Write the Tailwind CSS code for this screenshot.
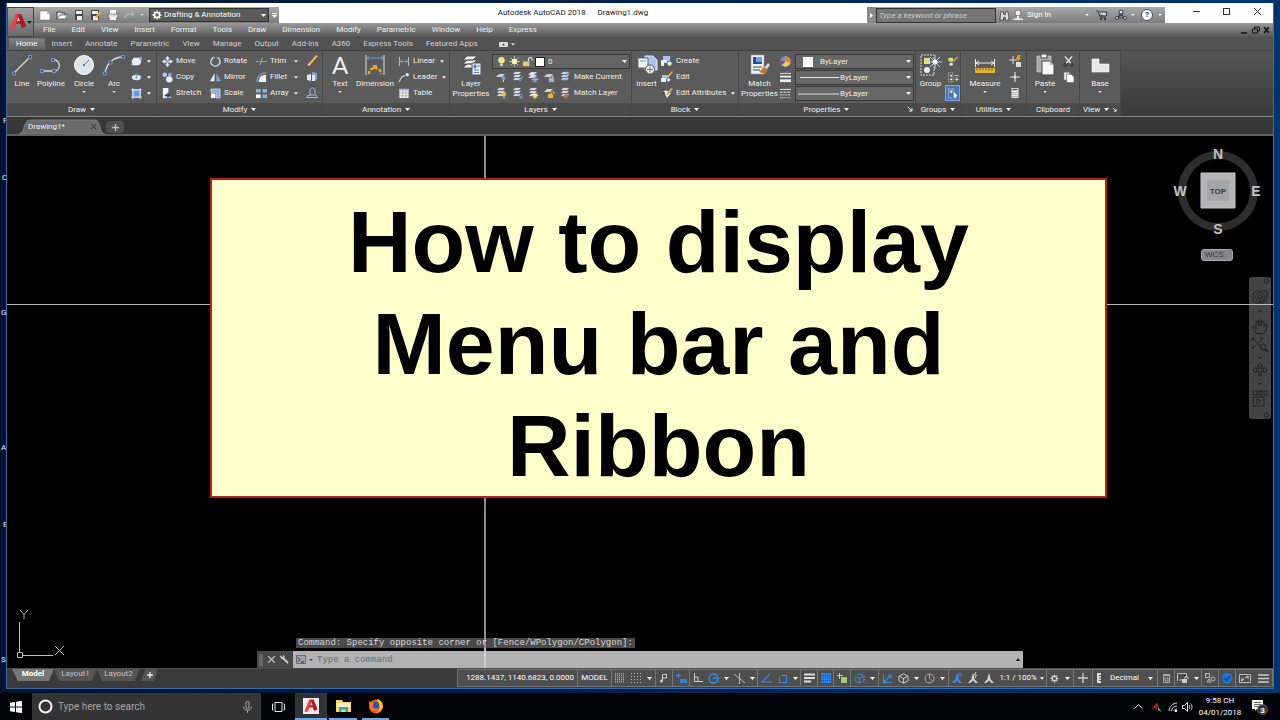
<!DOCTYPE html>
<html lang="en">
<head>
    <meta charset="UTF-8">
    <meta name="viewport" content="width=device-width, initial-scale=1.0">
    <title>Autodesk AutoCAD 2018 - Drawing1.dwg</title>
    <script src="https://cdn.jsdelivr.net/npm/@tailwindcss/browser@4"></script>
</head>
<body class="h-screen overflow-hidden flex flex-col bg-[#020a1c] font-['Roboto','Noto_Sans',sans-serif] text-[8px] leading-[10px] text-[#f0f0f0]">

    <!-- shared glyphs -->
    <svg class="hidden">
        <symbol id="dn" viewBox="0 0 5 3"><path d="M0 0h5L2.500 3z" fill="currentColor"/></symbol>
        <symbol id="acad" viewBox="0 0 20 20">
            <path d="M2 17L8 2h5l5 12-4 2-1.500-4H8l-2 5z" fill="#c4272d"/>
            <path d="M8 2l2 1-4 14H2z" fill="#e8484a"/>
            <path d="M13 2l5 12-4 2-3.500-10z" fill="#a31a20"/>
            <path d="M9 9l1.500-4L12 9z" fill="#f3d5d5"/>
        </symbol>
        <symbol id="sheets" viewBox="0 0 12 12">
            <path d="M4 1h6L8 3H2zM4 4h6L8 6H2zM4 7h6L8 9H2z" fill="#e8ecf2" stroke="#8b95a5" stroke-width=".4"/>
        </symbol>
        <symbol id="gear" viewBox="0 0 12 12">
            <circle cx="6" cy="6" r="3" fill="none" stroke="currentColor" stroke-width="1.800"/>
            <path d="M6 .5v2M6 9.500v2M.5 6h2M9.500 6h2M2.100 2.100l1.400 1.400M8.500 8.500l1.400 1.400M9.900 2.100L8.500 3.500M3.500 8.500L2.100 9.900" stroke="currentColor" stroke-width="1.600"/>
        </symbol>
        <symbol id="launch" viewBox="0 0 5 5"><path d="M0 0l4 4M4 1v3H1" stroke="currentColor" fill="none"/></symbol>
        <symbol id="man" viewBox="0 0 12 12"><path d="M6 1l1 3 .5 3L11 11H8.500L6 8.500 3.500 11H1l3.500-4L5 4z" fill="currentColor"/></symbol>
        <symbol id="cube" viewBox="0 0 12 12"><path d="M6 1l5 2.500v5L6 11 1 8.500v-5zM1 3.500L6 6l5-2.500M6 6v5" fill="none" stroke="currentColor"/></symbol>
    </svg>

    <div class="relative flex-1 min-h-0 flex bg-linear-to-r from-[#001430] to-[#00356b] pt-[3px] pl-[6px] pr-[6px] pb-[4px]">

        <!-- desktop icon captions that stick out behind the window -->
        <div class="absolute left-0 top-0 w-[7px] h-full">
            <span class="absolute left-[3px] top-[116px]">P</span>
            <span class="absolute left-[2px] top-[173px]">C</span>
            <span class="absolute left-[1px] top-[308px]">G</span>
            <span class="absolute left-[1px] top-[443px]">A</span>
            <span class="absolute left-[3px] top-[520px]">E</span>
            <span class="absolute left-[1px] top-[655px]">S</span>
        </div>

        <main class="relative flex-1 min-w-0 flex flex-col border-x border-b border-[#3c6ca8] bg-black">

            <!-- title bar and menu bar -->
            <header class="flex bg-white">
                <div class="w-[27px] pt-1 flex">
                    <button aria-label="Application menu" class="flex-1 flex items-center bg-linear-to-b from-[#a0a0a0] to-[#6a6a6a] border border-[#444]">
                        <svg class="w-5 h-5" viewBox="0 0 20 20"><use href="#acad"/></svg>
                        <svg class="w-[5px] h-[3px] -ml-px text-[#222]"><use href="#dn"/></svg>
                    </button>
                </div>
                <div class="flex-1 min-w-0 flex flex-col">
                    <div class="h-5 flex items-end text-[#222]">
                        <div class="h-4 w-[245px] flex items-center bg-linear-to-b from-[#a9a9a9] to-[#7c7c7c]">
                            <div class="flex-1 flex items-center justify-evenly">
                                <button aria-label="New"><svg class="w-3 h-3" viewBox="0 0 12 12"><path d="M1 2h7l3 3v6H1z" fill="#fff" stroke="#777" stroke-width=".5"/><path d="M8 2v3h3" fill="#bbb"/></svg></button>
                                <button aria-label="Open"><svg class="w-3 h-3" viewBox="0 0 12 12"><path d="M1 10V3h4l1 1h3v2" fill="#ddd" stroke="#444"/><path d="M1 10l3-4h8l-3 4z" fill="#fff" stroke="#444" stroke-width=".7"/></svg></button>
                                <button aria-label="Save"><svg class="w-3 h-3" viewBox="0 0 12 12"><path d="M2 1h8v10H2z" fill="#444"/><path d="M3 2h6v3H3zM4 7h5v4H4z" fill="#eee"/></svg></button>
                                <button aria-label="Save as"><svg class="w-3 h-3" viewBox="0 0 12 12"><path d="M1 1h8v10H1z" fill="#444"/><path d="M2 2h6v3H2zM3 7h5v4H3z" fill="#eee"/><path d="M5 8l5-6 2 1-5 6z" fill="#e5a92c"/></svg></button>
                                <button aria-label="Plot"><svg class="w-3 h-3" viewBox="0 0 12 12"><path d="M3 1h6v4H3z" fill="#fff"/><path d="M1 5h10v4H1z" fill="#ddd" stroke="#555" stroke-width=".6"/><path d="M3 8h6v3H3z" fill="#fff"/></svg></button>
                                <button aria-label="Redo" class="flex items-center gap-1"><svg class="w-3 h-3" viewBox="0 0 12 12"><path d="M1 9c0-3 3-4 6-4" fill="none" stroke="#b4b4b4" stroke-width="1.500"/><path d="M7 2l4 3-4 3z" fill="#b4b4b4"/></svg><svg class="w-[4px] h-[2px] text-[#ddd]"><use href="#dn"/></svg></button>
                            </div>
                            <div class="h-[14px] w-[120px] flex items-center gap-px px-[2px] bg-[#5a5a5a] border border-[#333] text-white">
                                <svg class="w-[10px] h-[10px]"><use href="#gear"/></svg>
                                <select aria-label="Workspace" class="appearance-none flex-1 min-w-0 bg-transparent outline-none pl-px"><option>Drafting &amp; Annotation</option></select>
                                <svg class="w-[5px] h-[3px]"><use href="#dn"/></svg>
                            </div>
                            <button aria-label="Customize toolbar" class="w-[10px] flex flex-col items-center gap-px text-white"><span class="w-[5px] h-px bg-white"></span><svg class="w-[5px] h-[3px]"><use href="#dn"/></svg></button>
                        </div>
                        <h1 class="flex-1 self-center text-center whitespace-pre">Autodesk AutoCAD 2018      Drawing1.dwg</h1>
                        <div class="h-4 w-[298px] flex items-center bg-linear-to-b from-[#a9a9a9] to-[#7c7c7c] text-white">
                            <button aria-label="Collapse search" class="w-[9px] h-full flex items-center justify-center bg-[#8a8a8a]"><svg class="w-[3px] h-[5px]" viewBox="0 0 3 5"><path d="M0 0l3 2.500L0 5z" fill="#fff"/></svg></button>
                            <input aria-label="Search help" placeholder="Type a keyword or phrase" class="w-[120px] h-[15px] px-[2px] italic bg-[#757575] border border-[#333] placeholder:text-[#cfcfcf] outline-none">
                            <button aria-label="Search" class="w-[16px] flex justify-center"><svg class="w-[11px] h-[11px]" viewBox="0 0 12 12"><path d="M2 2h3v3h2V2h3l1 9H7V8H5v3H1z" fill="#ddd" stroke="#333" stroke-width=".8"/></svg></button>
                            <button class="flex-1 flex items-center gap-[3px]"><svg class="w-[12px] h-3" viewBox="0 0 12 12"><circle cx="6" cy="4" r="3" fill="#eee" stroke="#555" stroke-width=".7"/><path d="M5 7h2v2l4 1v1H1v-1l4-1z" fill="#eee"/></svg><span class="flex-1 text-left">Sign In</span><svg class="w-[4px] h-[2px]"><use href="#dn"/></svg></button>
                            <button aria-label="App store" class="w-[26px] flex justify-center"><svg class="w-[12px] h-3" viewBox="0 0 12 12"><path d="M0 2h2l2 6h6M3 3h8l-1 4H4" fill="#cdd5e8" stroke="#223" stroke-width=".9"/><circle cx="5" cy="10" r="1" fill="#223"/><circle cx="9" cy="10" r="1" fill="#223"/></svg></button>
                            <button aria-label="Stay connected" class="w-[22px] flex items-center gap-[4px]"><svg class="w-3 h-3 text-[#223]" viewBox="0 0 12 12"><path d="M6 3L3 9h6zM2 9l4-3 4 3" fill="none" stroke="#33384d"/><circle cx="6" cy="3" r="2" fill="#dde3f3" stroke="#33384d"/><circle cx="2" cy="9" r="1.500" fill="#dde3f3" stroke="#33384d"/><circle cx="10" cy="9" r="1.500" fill="#dde3f3" stroke="#33384d"/></svg><svg class="w-[4px] h-[2px]"><use href="#dn"/></svg></button>
                            <button aria-label="Help" class="w-[28px] pl-1 flex items-center gap-[5px]"><span class="w-3 h-3 rounded-full bg-white border border-[#344f86] text-[#1d3976] font-bold flex items-center justify-center">?</span><svg class="w-[4px] h-[2px]"><use href="#dn"/></svg></button>
                        </div>
                        <div class="w-[108px] self-stretch pb-1 flex items-center justify-around pl-[16px]">
                            <button aria-label="Minimize" class="w-[7px] h-px bg-[#333]"></button>
                            <button aria-label="Restore" class="w-[7px] h-[7px] border border-[#333]"></button>
                            <button aria-label="Close"><svg class="w-[7px] h-[7px]" viewBox="0 0 7 7"><path d="M0 0l7 7M7 0L0 7" stroke="#333"/></svg></button>
                        </div>
                    </div>
                    <nav aria-label="Menu bar" class="h-[14px] flex items-center pl-px bg-linear-to-b from-[#999] to-[#575757]">
                        <a href="#" class="px-2">File</a>
                        <a href="#" class="px-2">Edit</a>
                        <a href="#" class="px-2">View</a>
                        <a href="#" class="px-2">Insert</a>
                        <a href="#" class="px-2">Format</a>
                        <a href="#" class="px-2">Tools</a>
                        <a href="#" class="px-2">Draw</a>
                        <a href="#" class="px-2">Dimension</a>
                        <a href="#" class="px-2">Modify</a>
                        <a href="#" class="px-2">Parametric</a>
                        <a href="#" class="px-2">Window</a>
                        <a href="#" class="px-2">Help</a>
                        <a href="#" class="px-2">Express</a>
                        <svg class="ml-auto mr-1 w-[28px] h-[8px]" viewBox="0 0 28 8"><path d="M0 7h6" stroke="#111" stroke-width="1.500"/><path d="M13.500 3V1h5v4h-2M11.500 3h5v4h-5z" fill="none" stroke="#111"/><path d="M23 1l5 6M28 1l-5 6" stroke="#111" stroke-width="1.600"/></svg>
                    </nav>
                </div>
            </header>

            <!-- ribbon tabs -->
            <nav aria-label="Ribbon tabs" class="h-[13px] flex items-end gap-px pl-[2px] bg-[#525252] text-[#cfcfcf]">
                <a href="#" class="h-[12px] px-[6px] bg-linear-to-b from-[#808080] to-[#5d5d5d] border-x border-t border-[#777] text-white">Home</a>
                <a href="#" class="h-[12px] px-[6px] pt-px">Insert</a>
                <a href="#" class="h-[12px] px-[6px] pt-px">Annotate</a>
                <a href="#" class="h-[12px] px-[6px] pt-px">Parametric</a>
                <a href="#" class="h-[12px] px-[6px] pt-px">View</a>
                <a href="#" class="h-[12px] px-[6px] pt-px">Manage</a>
                <a href="#" class="h-[12px] px-[6px] pt-px">Output</a>
                <a href="#" class="h-[12px] px-[6px] pt-px">Add-ins</a>
                <a href="#" class="h-[12px] px-[6px] pt-px">A360</a>
                <a href="#" class="h-[12px] px-[6px] pt-px">Express Tools</a>
                <a href="#" class="h-[12px] px-[6px] pt-px">Featured Apps</a>
                <button aria-label="Minimize ribbon" class="h-[12px] ml-[14px] flex items-center gap-[3px]"><svg class="w-[9px] h-[5px]" viewBox="0 0 9 5"><rect width="9" height="5" rx="1" fill="#ddd"/><path d="M3 3.500h3L4.500 1.500z" fill="#444"/></svg><svg class="w-[4px] h-[3px]"><use href="#dn"/></svg></button>
            </nav>

            <!-- ribbon panels -->
            <div class="h-[67px] flex bg-linear-to-b from-[#555] to-[#3a3a3a] border-t border-b border-t-[#404040] border-b-[#858585]">

                <section class="w-[150px] flex flex-col bg-[#5b5b5b] border-r border-[#474747]">
                    <div class="flex-1 flex pl-1">
                        <button class="w-[22px] pt-[3px] flex flex-col items-center gap-[3px]"><svg class="w-[22px] h-[22px]" viewBox="0 0 22 22"><path d="M3 19L19 3" stroke="#ddd" stroke-width="1.200"/><path d="M1.500 18h3v3h-3zM17.500 1.500h3v3h-3z" fill="#35507c" stroke="#7fa6df" stroke-width=".8"/></svg>Line</button>
                        <button class="w-[36px] pt-[3px] flex flex-col items-center gap-[3px]"><svg class="w-[22px] h-[22px]" viewBox="0 0 22 22"><path d="M2 17h12c7 0 7-11 0-11" fill="none" stroke="#ddd" stroke-width="1.300"/><path d="M.5 15.500h3v3h-3zM12.500 15.500h3v3h-3zM11.500 4.500h3v3h-3z" fill="#35507c" stroke="#7fa6df" stroke-width=".8"/></svg>Polyline</button>
                        <button class="w-[30px] pt-[3px] flex flex-col items-center gap-[3px]"><svg class="w-[22px] h-[22px]" viewBox="0 0 22 22"><circle cx="11" cy="11" r="9.500" fill="#dfe4ea" stroke="#fff"/><path d="M11 11l5-5" stroke="#4d78bb"/><path d="M10 10h2v2h-2z" fill="#4d78bb"/></svg>Circle<svg class="w-[4px] h-[2px] -mt-px"><use href="#dn"/></svg></button>
                        <button class="w-[30px] pt-[3px] flex flex-col items-center gap-[3px]"><svg class="w-[22px] h-[22px]" viewBox="0 0 22 22"><path d="M2 20C3 10 10 3 20 3" fill="none" stroke="#ddd" stroke-width="1.300"/><path d="M.5 18h3v3h-3zM6 7h3v3H6zM18.500 1.500h3v3h-3z" fill="#35507c" stroke="#7fa6df" stroke-width=".8"/></svg>Arc<svg class="w-[4px] h-[2px] -mt-px"><use href="#dn"/></svg></button>
                        <div class="flex-1 pt-[2px] flex flex-col">
                            <button aria-label="Rectangle" class="h-4 pl-[2px] flex items-center gap-[5px]"><svg class="w-[11px] h-[11px]" viewBox="0 0 12 12"><path d="M1 5l2-3h8v5l-2 3H1z" fill="#e8ebf0"/><path d="M9 1h3v3H9zM0 8h2v2H0z" fill="#7ba3dd"/></svg><svg class="w-[4px] h-[3px]"><use href="#dn"/></svg></button>
                            <button aria-label="Ellipse" class="h-4 pl-[2px] flex items-center gap-[5px]"><svg class="w-[11px] h-[11px]" viewBox="0 0 12 12"><ellipse cx="6" cy="6" rx="5" ry="3" fill="#e8ebf0"/><path d="M5 1h2v3H5zM5 5h2v2H5zM10 5h2v2h-2z" fill="#5f8bcb"/></svg><svg class="w-[4px] h-[3px]"><use href="#dn"/></svg></button>
                            <button aria-label="Hatch" class="h-4 pl-[2px] flex items-center gap-[5px]"><svg class="w-[11px] h-[11px]" viewBox="0 0 12 12"><path d="M2 2h8v8H2z" fill="#6d9be0" stroke="#dde" /><path d="M0 2h12M0 10h12M2 0v12M10 0v12" stroke="#dfe6f2" stroke-width=".9"/></svg><svg class="w-[4px] h-[3px]"><use href="#dn"/></svg></button>
                        </div>
                    </div>
                    <button class="h-[13px] flex items-center justify-center gap-[4px] bg-[#4a4a4a]">Draw<svg class="w-[5px] h-[3px]"><use href="#dn"/></svg></button>
                </section>

                <section class="w-[166px] flex flex-col bg-[#5b5b5b] border-r border-[#474747]">
                    <div class="flex-1 flex pl-[5px] pt-[2px]">
                        <div class="w-[48px] flex flex-col">
                            <button class="h-4 flex items-center gap-[3px]"><svg class="w-[11px] h-[11px]" viewBox="0 0 12 12"><path d="M6 0l2.500 3H7v2h2V3.500L12 6 9 8.500V7H7v2h1.500L6 12 3.500 9H5V7H3v1.500L0 6l3-2.500V5h2V3H3.500z" fill="#e3eaf6"/><path d="M5 5h2v2H5z" fill="#5580bd"/></svg>Move</button>
                            <button class="h-4 flex items-center gap-[3px]"><svg class="w-[11px] h-[11px]" viewBox="0 0 12 12"><circle cx="3" cy="3" r="2.500" fill="#b8c9e4"/><circle cx="8.500" cy="3" r="2" fill="#8eb0e2"/><circle cx="8" cy="8" r="3.500" fill="#e9edf4"/></svg>Copy</button>
                            <button class="h-4 flex items-center gap-[3px]"><svg class="w-[11px] h-[11px]" viewBox="0 0 12 12"><path d="M1 0h6v11H1z" fill="#f1f3f6"/><path d="M5 5l6 6H5z" fill="#8eb0e2"/><path d="M3 7h3V5l3 3-3 3V9H3z" fill="#2b3b54"/></svg>Stretch</button>
                        </div>
                        <div class="w-[46px] flex flex-col">
                            <button class="h-4 flex items-center gap-[3px]"><svg class="w-[11px] h-[11px]" viewBox="0 0 12 12"><path d="M8 1.500A5 5 0 1 1 3.500 1.700" fill="none" stroke="#cdd8ea" stroke-width="1.500"/><path d="M3 0l3 1.500L4 4z" fill="#7ba3dd"/></svg>Rotate</button>
                            <button class="h-4 flex items-center gap-[3px]"><svg class="w-[11px] h-[11px]" viewBox="0 0 12 12"><path d="M5 1v9H0z" fill="#e9edf4"/><path d="M7 1v9h5z" fill="#7ba3dd"/></svg>Mirror</button>
                            <button class="h-4 flex items-center gap-[3px]"><svg class="w-[11px] h-[11px]" viewBox="0 0 12 12"><path d="M1 1h10v10H7V5H1z" fill="#8eb0e2" stroke="#eee" stroke-width=".6"/><path d="M1 6h5v5H1z" fill="#fff"/></svg>Scale</button>
                        </div>
                        <div class="w-[50px] flex flex-col">
                            <button class="h-4 pr-[8px] flex items-center gap-[3px]"><svg class="w-[11px] h-[11px]" viewBox="0 0 12 12"><path d="M0 6h4M8 6h4" stroke="#7ba3dd" stroke-width="1.200"/><path d="M4 10L7 2M6 6h2" stroke="#bbb"/></svg>Trim<svg class="ml-auto w-[4px] h-[3px]"><use href="#dn"/></svg></button>
                            <button class="h-4 pr-[8px] flex items-center gap-[3px]"><svg class="w-[11px] h-[11px]" viewBox="0 0 12 12"><path d="M1 11C1 5 5 1 11 1" fill="none" stroke="#7ba3dd" stroke-width="1.500"/><path d="M3 11c0-5 3-8 8-8v8z" fill="#f4f4f4"/></svg>Fillet<svg class="ml-auto w-[4px] h-[3px]"><use href="#dn"/></svg></button>
                            <button class="h-4 pr-[8px] flex items-center gap-[3px]"><svg class="w-[11px] h-[11px]" viewBox="0 0 12 12"><path d="M0 1h5v4H0zM7 1h5v4H7zM7 7h5v4H7z" fill="#8eb0e2"/><path d="M0 7h5v4H0z" fill="#fff"/></svg>Array<svg class="ml-auto w-[4px] h-[3px]"><use href="#dn"/></svg></button>
                        </div>
                        <div class="flex flex-col">
                            <button aria-label="Erase" class="h-4"><svg class="w-[12px] h-[12px]" viewBox="0 0 12 12"><path d="M3 8l7-8 2 1-7 8z" fill="#f0b74c"/><path d="M3 8l2 1-2 2H1z" fill="#eee"/><path d="M1 11h8" stroke="#c33"/></svg></button>
                            <button aria-label="Explode" class="h-4"><svg class="w-[12px] h-[12px]" viewBox="0 0 12 12"><path d="M6 1l5 1v6l-2 2H6z" fill="#7ba3dd"/><path d="M1 4l4-1v7l-4-1zM6 4h3v6H6z" fill="#dfe7f4"/></svg></button>
                            <button aria-label="Offset" class="h-4"><svg class="w-[12px] h-[12px]" viewBox="0 0 12 12"><path d="M1 10.500V9l3-1V4c0-4 5-4 5 0v4l2 1v1.500zM4 8h4" fill="none" stroke="#a9bddd"/></svg></button>
                        </div>
                    </div>
                    <button class="h-[13px] flex items-center justify-center gap-[4px] bg-[#4a4a4a]">Modify<svg class="w-[5px] h-[3px]"><use href="#dn"/></svg></button>
                </section>

                <section class="w-[127px] flex flex-col bg-[#5b5b5b] border-r border-[#474747]">
                    <div class="flex-1 flex pl-[3px]">
                        <button class="w-[28px] pt-[3px] flex flex-col items-center gap-[3px]"><span class="h-[22px] font-['Lato'] text-[24px] leading-[22px] text-[#eee]">A</span>Text<svg class="w-[4px] h-[2px] -mt-px"><use href="#dn"/></svg></button>
                        <button class="w-[42px] pt-[3px] flex flex-col items-center gap-[3px]"><svg class="w-[22px] h-[22px]" viewBox="0 0 22 22"><path d="M2 1v20M20 1v20" stroke="#ddd"/><path d="M2 4h18M5 2L2.500 4 5 6M17 2l2.500 2L17 6" fill="none" stroke="#6f9de2"/><path d="M5 20c0-8 12-8 12 0" fill="none" stroke="#e5a334" stroke-width="2.500" stroke-dasharray="3 1.500"/><path d="M9 11h4v4H9z" fill="#e5a334"/></svg>Dimension</button>
                        <div class="flex-1 pt-[2px] pl-[2px] flex flex-col">
                            <button class="h-4 flex items-center gap-[3px]"><svg class="w-[12px] h-[11px]" viewBox="0 0 12 12"><path d="M1 1v10M11 1v10" stroke="#ccc"/><path d="M1 6h10M4 4L2 6l2 2M8 4l2 2-2 2" fill="none" stroke="#6f9de2"/></svg>Linear<svg class="ml-[2px] w-[4px] h-[3px]"><use href="#dn"/></svg></button>
                            <button class="h-4 flex items-center gap-[3px]"><svg class="w-[12px] h-[11px]" viewBox="0 0 12 12"><path d="M1 11c1-4 2-7 6-7" fill="none" stroke="#ccc" stroke-width="1.200"/><circle cx="9.500" cy="3" r="1.800" fill="#dce6f6"/></svg>Leader<svg class="ml-[2px] w-[4px] h-[3px]"><use href="#dn"/></svg></button>
                            <button class="h-4 flex items-center gap-[3px]"><svg class="w-[12px] h-[11px]" viewBox="0 0 12 12"><path d="M1 1h10v10H1z" fill="#f4f4f4"/><path d="M1 1h10v2H1z" fill="#9db8e0"/><path d="M1 5.500h10M1 8.500h10M4.500 3v8M8 3v8" stroke="#888" stroke-width=".6"/></svg>Table</button>
                        </div>
                    </div>
                    <button class="h-[13px] flex items-center justify-center gap-[4px] bg-[#4a4a4a]">Annotation<svg class="w-[5px] h-[3px]"><use href="#dn"/></svg></button>
                </section>

                <section class="w-[182px] flex flex-col bg-[#5b5b5b] border-r border-[#474747]">
                    <div class="flex-1 flex">
                        <button class="w-[42px] pt-[3px] flex flex-col items-center gap-[3px]"><svg class="w-[22px] h-[22px]" viewBox="0 0 22 22"><path d="M7 2h10l-4 4H3zM7 6h10l-4 4H3zM7 10h10l-4 4H3z" fill="#f0f0f0" stroke="#444" stroke-width=".8"/><path d="M12 9h9v12h-9z" fill="#e9eef6" stroke="#556"/><path d="M14 11h2v3h-2zM14 16h5M14 18.500h5M17 12h3" stroke="#5b82bb" fill="#5b82bb"/></svg><span>Layer<br>Properties</span></button>
                        <div class="flex-1 pt-[3px] pr-px flex flex-col">
                            <div class="h-[15px] flex items-center gap-[2px] px-[3px] border border-[#383838] bg-[#646464]">
                                <svg class="w-[11px] h-[11px]" viewBox="0 0 12 12"><circle cx="6" cy="4.500" r="3.500" fill="#f7e58c"/><path d="M4.500 8h3v3h-3z" fill="#ccc"/></svg>
                                <svg class="w-[11px] h-[11px]" viewBox="0 0 12 12"><path d="M6 0v12M0 6h12M2 2l8 8M10 2l-8 8" stroke="#e6dca0" stroke-width=".8"/><circle cx="6" cy="6" r="3" fill="#f7eeb5"/></svg>
                                <svg class="w-[11px] h-[11px]" viewBox="0 0 12 12"><path d="M1 6h7v5H1z" fill="#e8cf72"/><path d="M7 6V3.500c0-2.500 4-2.500 4 0V5" fill="none" stroke="#ddd" stroke-width="1.300"/></svg>
                                <span class="w-[10px] h-[10px] bg-white border border-[#222]"></span>
                                <select aria-label="Layer" class="appearance-none flex-1 min-w-0 bg-transparent outline-none pl-px"><option>0</option></select>
                                <svg class="w-[5px] h-[3px] -mr-px"><use href="#dn"/></svg>
                            </div>
                            <div class="h-4 pl-[3px] flex items-center gap-[4px]">
                                <button aria-label="Layer off"><svg class="w-3 h-3 block" viewBox="0 0 12 12"><path d="M4 3h6L7 6H1z" fill="#ccd"/><circle cx="8.500" cy="7" r="2" fill="#7ba3dd"/><path d="M8 9h1v2H8z" fill="#ddd"/></svg></button>
                                <button aria-label="Isolate layer"><svg class="w-3 h-3 block" viewBox="0 0 12 12"><use href="#sheets"/><path d="M7 7l2 3 3-5" stroke="#7ba3dd" fill="none"/></svg></button>
                                <button aria-label="Freeze layer"><svg class="w-3 h-3 block" viewBox="0 0 12 12"><path d="M4 1h6L7 4H1zM4 4h6L7 7H1z" fill="#dde"/><path d="M8 5v7M4.500 8.500h7M5.500 6l5 5M10.500 6l-5 5" stroke="#8fb5ea"/></svg></button>
                                <button aria-label="Lock layer"><svg class="w-3 h-3 block" viewBox="0 0 12 12"><path d="M4 3h6L7 6H1z" fill="#ccd"/><path d="M6 7h5v4H6z" fill="#9cb0cc"/><path d="M7 7V5h3v2" fill="none" stroke="#ccc"/></svg></button>
                                <button class="flex items-center gap-[3px]"><svg class="w-3 h-3" viewBox="0 0 12 12"><use href="#sheets"/><path d="M7 1l4 1-4 8-3-1z" fill="#7ba3dd" fill-opacity=".6"/></svg>Make Current</button>
                            </div>
                            <div class="h-4 pl-[3px] flex items-center gap-[4px]">
                                <button aria-label="Turn all layers on"><svg class="w-3 h-3 block" viewBox="0 0 12 12"><use href="#sheets"/><circle cx="9" cy="7" r="2.200" fill="#f3b93e"/><path d="M8.500 9h1v2.500h-1z" fill="#ddd"/></svg></button>
                                <button aria-label="Unisolate"><svg class="w-3 h-3 block" viewBox="0 0 12 12"><use href="#sheets"/><path d="M5 6l6 5M11 7v4H8" stroke="#7ba3dd" fill="none"/></svg></button>
                                <button aria-label="Thaw all layers"><svg class="w-3 h-3 block" viewBox="0 0 12 12"><use href="#sheets"/><path d="M8 5v7M4.500 8.500h7M5.500 6l5 5M10.500 6l-5 5" stroke="#f3d55e"/><circle cx="8" cy="8.500" r="2" fill="#ffe98a"/></svg></button>
                                <button aria-label="Unlock layer"><svg class="w-3 h-3 block" viewBox="0 0 12 12"><path d="M4 2h6L7 5H1z" fill="#e8d9a0"/><path d="M5 7h5v4H5z" fill="#f0b43c"/><path d="M8 7V5h3v2" fill="none" stroke="#f0b43c"/></svg></button>
                                <button class="flex items-center gap-[3px]"><svg class="w-3 h-3" viewBox="0 0 12 12"><use href="#sheets"/><path d="M6 7l4 1-3 4-3-2z" fill="#c8713a"/></svg>Match Layer</button>
                            </div>
                        </div>
                    </div>
                    <button class="h-[13px] flex items-center justify-center gap-[4px] bg-[#4a4a4a]">Layers<svg class="w-[5px] h-[3px]"><use href="#dn"/></svg></button>
                </section>

                <section class="w-[107px] flex flex-col bg-[#5b5b5b] border-r border-[#474747]">
                    <div class="flex-1 flex">
                        <button class="w-[29px] pt-[3px] flex flex-col items-center gap-[3px]"><svg class="w-[22px] h-[22px]" viewBox="0 0 22 22"><path d="M9 2h8l4 4v10H9z" fill="#a9c3ea" stroke="#dfe7f4"/><path d="M2 4h10v10H2z" fill="#f0f2f5" stroke="#667"/><path d="M4 6h6v2H4z" fill="#b8c4d8"/><circle cx="14" cy="15.500" r="4.500" fill="#eee" stroke="#555"/><path d="M14 12.500v6M11 15.500h6" stroke="#777"/></svg>Insert</button>
                        <div class="flex-1 pt-[2px] flex flex-col whitespace-nowrap">
                            <button class="h-4 flex items-center gap-[3px]"><svg class="w-[12px] h-[12px]" viewBox="0 0 12 12"><path d="M2 1h7v5H2z" fill="#a9c3ea"/><path d="M0 5h6v3H3v3H0z" fill="#e9edf4"/><circle cx="8.500" cy="8.500" r="2.500" fill="#eee" stroke="#555" stroke-width=".7"/></svg>Create</button>
                            <button class="h-4 flex items-center gap-[3px]"><svg class="w-[12px] h-[12px]" viewBox="0 0 12 12"><path d="M1 4h7v4H1z" fill="#a9c3ea"/><path d="M0 7h5v4H0z" fill="#e9edf4"/><circle cx="7.500" cy="9" r="2" fill="#eee" stroke="#555" stroke-width=".7"/><path d="M6 5l5-5 1 1-4 5z" fill="#f0a63c"/></svg>Edit</button>
                            <button class="h-4 pr-[3px] flex items-center gap-[3px]"><svg class="w-[12px] h-[12px]" viewBox="0 0 12 12"><path d="M2 3l4 8 4-5-3-2z" fill="#e9edf4"/><path d="M5 7l5-6 2 1-5 6z" fill="#e0a33a"/><path d="M1 3h3M2 6h2" stroke="#222"/></svg>Edit Attributes<svg class="ml-auto w-[4px] h-[3px]"><use href="#dn"/></svg></button>
                        </div>
                    </div>
                    <button class="h-[13px] flex items-center justify-center gap-[4px] bg-[#4a4a4a]">Block<svg class="w-[5px] h-[3px]"><use href="#dn"/></svg></button>
                </section>

                <section class="w-[177px] flex flex-col bg-[#5b5b5b] border-r border-[#474747]">
                    <div class="flex-1 flex">
                        <button class="w-[41px] pt-[3px] flex flex-col items-center gap-[3px]"><svg class="w-[22px] h-[22px]" viewBox="0 0 22 22"><path d="M2 1h13v19H2z" fill="#eef1f5" stroke="#999" stroke-width=".6"/><path d="M4 3h9v7H4z" fill="#2d4f83"/><path d="M7 3h6v5H7z" fill="#6f9de2"/><path d="M4 13h9M4 16h7" stroke="#444"/><path d="M19 9l2 2-4 5-2-2z" fill="#ddd"/><path d="M15 13l4 3-3 4-6-2z" fill="#c9722c"/></svg><span>Match<br>Properties</span></button>
                        <div class="w-[15px] pt-[2px] flex flex-col">
                            <span class="h-4 flex items-center"><svg class="w-[11px] h-[11px]" viewBox="0 0 12 12"><circle cx="6" cy="6" r="5.500" fill="#eee"/><path d="M6 6V.5A5.500 5.500 0 0 1 11 8z" fill="#e5803c"/><path d="M6 6l5 2a5.500 5.500 0 0 1-9 2z" fill="#e0d35a"/><path d="M6 6l-4 4A5.500 5.500 0 0 1 1 4z" fill="#8a3c96"/><path d="M6 6L1 4a5.500 5.500 0 0 1 5-3.500z" fill="#5c8fd8"/></svg></span>
                            <span class="h-4 flex items-center"><svg class="w-[11px] h-[11px]" viewBox="0 0 12 12"><path d="M0 1.500h12" stroke="#eee"/><path d="M0 5h12" stroke="#eee" stroke-width="2"/><path d="M0 9.500h12" stroke="#eee" stroke-width="3"/></svg></span>
                            <span class="h-4 flex items-center"><svg class="w-[11px] h-[11px]" viewBox="0 0 12 12"><path d="M0 1.500h12" stroke="#eee"/><path d="M0 4.500h12" stroke="#eee" stroke-dasharray="3 1"/><path d="M0 7.500h12" stroke="#eee" stroke-dasharray="2 1"/><path d="M0 10.500h12" stroke="#eee" stroke-dasharray="1 1"/></svg></span>
                        </div>
                        <div class="flex-1 pt-[3px] pr-px flex flex-col gap-px">
                            <div class="h-[15px] flex items-center px-[2px] bg-[#676767] border border-[#383838]">
                                <span class="w-[10px] h-[10px] ml-[5px] mr-[7px] bg-white"></span>
                                <select aria-label="Object color" class="appearance-none flex-1 min-w-0 bg-transparent outline-none"><option>ByLayer</option></select>
                                <svg class="w-[5px] h-[3px]"><use href="#dn"/></svg>
                            </div>
                            <div class="h-[15px] flex items-center px-[2px] bg-[#676767] border border-[#383838]">
                                <span class="w-[39px] h-px ml-[2px] mr-px bg-[#e4e4e4]"></span>
                                <select aria-label="Lineweight" class="appearance-none flex-1 min-w-0 bg-transparent outline-none"><option>ByLayer</option></select>
                                <svg class="w-[5px] h-[3px]"><use href="#dn"/></svg>
                            </div>
                            <div class="h-[15px] flex items-center px-[2px] bg-[#676767] border border-[#383838]">
                                <span class="w-[41px] h-[2px] mr-px bg-[#a4a4a4]"></span>
                                <select aria-label="Linetype" class="appearance-none flex-1 min-w-0 bg-transparent outline-none"><option>ByLayer</option></select>
                                <svg class="w-[5px] h-[3px]"><use href="#dn"/></svg>
                            </div>
                        </div>
                    </div>
                    <div class="h-[13px] pl-[6px] pr-[2px] flex items-center bg-[#4a4a4a]"><button class="flex-1 flex items-center justify-center gap-[4px]">Properties<svg class="w-[5px] h-[3px]"><use href="#dn"/></svg></button><svg class="w-[5px] h-[5px]"><use href="#launch"/></svg></div>
                </section>

                <section class="w-[45px] flex flex-col bg-[#5b5b5b] border-r border-[#474747]">
                    <div class="flex-1 flex">
                        <button class="w-[29px] pt-[3px] flex flex-col items-center gap-[3px]"><svg class="w-[22px] h-[22px]" viewBox="0 0 22 22"><path d="M1 1h13v20H1z" fill="none" stroke="#ddd" stroke-dasharray="2 1"/><path d="M4 4h6v6H4z" fill="#e2dc7a"/><circle cx="7" cy="16" r="3" fill="#eee"/><path d="M15 1v14M8 8h14M10 3l10 10M20 3L10 13" stroke="#a6d3f2"/><circle cx="15" cy="8" r="2.500" fill="#fff"/></svg>Group</button>
                        <div class="flex-1 pt-[2px] flex flex-col">
                            <button aria-label="Ungroup" class="h-4 w-[15px] flex items-center justify-center"><svg class="w-[12px] h-[11px]" viewBox="0 0 12 12"><path d="M1 2h5v4H1z" fill="#e2dc7a"/><circle cx="4" cy="9" r="2" fill="#ddd"/><path d="M6 6l5-5" stroke="#e5a334" stroke-width="1.500"/></svg></button>
                            <button aria-label="Group edit" class="h-4 w-[15px] flex items-center justify-center"><svg class="w-[12px] h-[11px]" viewBox="0 0 12 12"><path d="M1 1h5v10H1z" fill="none" stroke="#ccc" stroke-dasharray="1 1"/><path d="M3 3h2v2H3zM3 7h2v2H3z" fill="#eee"/><path d="M8 4h4M8 8h4M10 6v4" stroke="#ddd"/></svg></button>
                            <button aria-label="Group selection on/off" class="h-4 w-[15px] flex items-center justify-center bg-[#4a76b4] border border-[#7fa6df]"><svg class="w-[12px] h-[11px]" viewBox="0 0 12 12"><path d="M1 1h6v10H1z" fill="none" stroke="#ddd" stroke-dasharray="1 1"/><circle cx="4" cy="4" r="1.500" fill="#ddd"/><path d="M7 4l4 5H9l1 2-1 .5L8 9.500l-1 1z" fill="#fff"/></svg></button>
                        </div>
                    </div>
                    <button class="h-[13px] flex items-center justify-center gap-[4px] bg-[#4a4a4a]">Groups<svg class="w-[5px] h-[3px]"><use href="#dn"/></svg></button>
                </section>

                <section class="w-[66px] flex flex-col bg-[#5b5b5b] border-r border-[#474747]">
                    <div class="flex-1 flex">
                        <button class="w-[48px] pt-[3px] flex flex-col items-center gap-[3px]"><svg class="w-[22px] h-[22px]" viewBox="0 0 22 22"><path d="M1.500 5v8M20.500 5v8M2 9h18M5 7L2 9l3 2M17 7l3 2-3 2" fill="none" stroke="#eee"/><path d="M1 14h20v5H1z" fill="#e3b23c"/><path d="M3 14v2.500M6 14v2.500M9 14v2.500M12 14v2.500M15 14v2.500M18 14v2.500" stroke="#6d4d0a" stroke-width=".8"/></svg>Measure<svg class="w-[4px] h-[2px] -mt-px"><use href="#dn"/></svg></button>
                        <div class="flex-1 pt-[2px] flex flex-col">
                            <button aria-label="Quick select" class="h-4"><svg class="w-[12px] h-[12px]" viewBox="0 0 12 12"><path d="M4 1v8M0 5h8" stroke="#ddd"/><path d="M7 7h5v5H7z" fill="#ddd"/><path d="M9 0l3 0-2 3h2L8 7l1-3H7z" fill="#f0a03a"/></svg></button>
                            <button aria-label="ID point" class="h-4"><svg class="w-[12px] h-[12px]" viewBox="0 0 12 12"><path d="M6 1v10M1 6h10" stroke="#ddd" stroke-width="1.200"/><circle cx="6" cy="6" r="1.500" fill="#ddd"/></svg></button>
                            <button aria-label="Calculator" class="h-4"><svg class="w-[12px] h-[12px]" viewBox="0 0 12 12"><path d="M2.500 1h7v10h-7z" fill="#eee"/><path d="M3.500 2.500h5" stroke="#555" stroke-width="1.500"/><path d="M3.500 5.500h5M3.500 7.500h5M3.500 9.500h5" stroke="#777" stroke-dasharray="1 1"/></svg></button>
                        </div>
                    </div>
                    <button class="h-[13px] flex items-center justify-center gap-[4px] bg-[#4a4a4a]">Utilities<svg class="w-[5px] h-[3px]"><use href="#dn"/></svg></button>
                </section>

                <section class="w-[53px] flex flex-col bg-[#5b5b5b] border-r border-[#474747]">
                    <div class="flex-1 flex">
                        <button class="w-[36px] pt-[3px] flex flex-col items-center gap-[3px]"><svg class="w-[22px] h-[22px]" viewBox="0 0 22 22"><path d="M3 2h14v16H3z" fill="#aaa" stroke="#ddd" stroke-width=".6"/><path d="M7 0h6v4H7z" fill="#eee" stroke="#444"/><path d="M8 7h8l4 4v10H8z" fill="#f8f8f8" stroke="#444"/><path d="M16 7v4h4z" fill="#bbb"/></svg>Paste<svg class="w-[4px] h-[2px] -mt-px"><use href="#dn"/></svg></button>
                        <div class="flex-1 pt-[2px] flex flex-col">
                            <button aria-label="Cut" class="h-4"><svg class="w-[11px] h-[12px]" viewBox="0 0 12 12"><path d="M2 1l7 8M10 1L3 9" stroke="#eee" stroke-width="1.300"/><circle cx="2.500" cy="10" r="1.500" fill="none" stroke="#222"/><circle cx="9.500" cy="10" r="1.500" fill="none" stroke="#222"/></svg></button>
                            <button aria-label="Copy clip" class="h-4"><svg class="w-[11px] h-[12px]" viewBox="0 0 12 12"><path d="M1 1h6v8H1z" fill="#ddd"/><path d="M4 3h5l3 3v6H4z" fill="#fff" stroke="#555" stroke-width=".6"/></svg></button>
                        </div>
                    </div>
                    <div class="h-[13px] flex items-center justify-center bg-[#4a4a4a]">Clipboard</div>
                </section>

                <section class="w-[41px] flex flex-col bg-[#5b5b5b] border-r border-[#474747]">
                    <button class="flex-1 pt-[3px] flex flex-col items-center gap-[3px]"><svg class="w-[22px] h-[22px]" viewBox="0 0 22 22"><path d="M3 5h7v5h10v8H3z" fill="#e6e8ec" stroke="#fff" stroke-width=".6"/></svg>Base<svg class="w-[4px] h-[2px] -mt-px"><use href="#dn"/></svg></button>
                    <div class="h-[13px] px-[3px] flex items-center bg-[#4a4a4a]"><button class="flex-1 flex items-center gap-[4px]">View<svg class="w-[5px] h-[3px]"><use href="#dn"/></svg></button><svg class="w-[4px] h-[4px]" viewBox="0 0 5 5"><use href="#launch"/></svg></div>
                </section>
            </div>

            <!-- drawing file tabs -->
            <div class="h-[19px] pl-[12px] flex items-end bg-[#373737] border-b-2 border-[#606060]">
                <div class="relative w-[86px] h-[15px]">
                    <svg class="absolute inset-0 w-full h-full" viewBox="0 0 86 15" preserveAspectRatio="none"><path d="M0 15C6 15 4 1 11 1h65c6 0 4 14 10 14z" fill="#6b6b6b" stroke="#858585" stroke-width=".8"/></svg>
                    <div class="relative h-full pl-[9px] pr-[9px] flex items-center justify-between">
                        <a href="#">Drawing1*</a>
                        <button aria-label="Close tab"><svg class="w-[5px] h-[5px]" viewBox="0 0 5 5"><path d="M0 0l5 5M5 0L0 5" stroke="#333"/></svg></button>
                    </div>
                </div>
                <button aria-label="New drawing" class="w-[18px] h-[12px] ml-px mb-px flex items-center justify-center rounded-[4px] bg-[#505050]"><svg class="w-[7px] h-[7px]" viewBox="0 0 7 7"><path d="M3.500 0v7M0 3.500h7" stroke="#bbb" stroke-width="1.400"/></svg></button>
            </div>

            <!-- model space -->
            <div class="relative flex-1 min-h-0 bg-black">
                <div class="absolute inset-x-0 top-[168px] h-px bg-[#b8b8b8]"></div>
                <div class="absolute inset-y-0 left-[477px] w-[2px] bg-[#8c8c8c]"></div>

                <div class="absolute left-[203px] top-[42px] w-[897px] h-[320px] pt-[11px] flex justify-center bg-[#ffffcc] border-2 border-[#b02418]">
                    <p class="w-[720px] text-center text-black font-bold font-['Liberation_Sans',Arial,sans-serif] text-[88px] leading-[102px]">How to display Menu bar and Ribbon</p>
                </div>

                <!-- view cube -->
                <div class="absolute right-[12px] top-[11px] w-[88px] flex flex-col items-center">
                    <svg class="w-[88px] h-[92px] font-['Liberation_Sans',sans-serif]" viewBox="0 0 88 92">
                        <circle cx="45" cy="44" r="36" fill="none" stroke="#2e2e2e" stroke-width="8"/>
                        <path d="M28 26h34v35H28z" fill="#b4b4b4" stroke="#c6c6c6"/>
                        <path d="M34 33h22v21H34z" fill="#a4a6ab"/>
                        <g text-anchor="middle" font-weight="bold" fill="#c2c2c2" font-size="14">
                            <text x="45" y="12">N</text><text x="45" y="87">S</text><text x="7" y="49">W</text><text x="83" y="49">E</text>
                        </g>
                        <text x="45" y="47" text-anchor="middle" font-weight="bold" font-size="8" fill="#3a3a3e">TOP</text>
                    </svg>
                    <button class="w-[32px] h-[12px] mt-[10px] pl-[3px] flex items-center text-left font-['Liberation_Sans',sans-serif] rounded-[3px] border border-[#aaaab4] bg-[#85858f] text-[#3a3a42]">WCS</button>
                </div>

                <!-- navigation bar -->
                <div class="absolute right-[2px] top-[141px] w-[22px] h-[142px] rounded-[3px] bg-[#444]">
                    <svg class="w-[22px] h-[142px]" viewBox="0 0 22 142" fill="none" stroke="#222">
                        <circle cx="17.500" cy="4" r="2"/><circle cx="17.500" cy="138" r="2"/>
                        <path d="M7 14h11v7l-4 5H7l-3-3v-6z"/><circle cx="11" cy="20" r="4.500"/><circle cx="11" cy="20" r="2"/>
                        <path d="M0 27.500h22" stroke="#c0c0c0"/>
                        <path d="M9 33h4l-2 2zM9 80h4l-2 2zM9 106h4l-2 2z" fill="#1c1c1c" stroke="none"/>
                        <path d="M7 56l-4-6 2-1 2 3v-7l2-1 1 5V43h2v6l1-5 2 1v5l2-3 1 2-2 6-3 2z"/>
                        <path d="M3 61l11 11M14 61L3 72M3 61h3M3 61v3M14 61h-3M3 72v-3"/><circle cx="14" cy="70" r="3"/><path d="M16 72l3 3" stroke-width="2"/>
                        <path d="M11 86l3 3h-2v3h3v-2l3 3-3 3v-2h-3v5h-2v-5H7v2l-3-3 3-3v2h3v-3H8z"/>
                        <path d="M4 114h4v4H4zM10 114h3v4h-3zM15 114h4v4h-4zM4 120h11v9H4zM8 122l4 2.500-4 2.500z"/>
                    </svg>
                </div>

                <!-- UCS icon -->
                <svg class="absolute left-[6px] bottom-[4px] w-[52px] h-[54px]" viewBox="0 0 52 54" fill="none" stroke="#bdbdbd">
                    <path d="M6.500 12v30M9 45.500h31M4.500 42.500h5v5h-5z"/>
                    <path d="M7 0l4 4.500L15 0M11 4.500V9M42 36l9 9M51 36l-9 9"/>
                </svg>

                <!-- command line -->
                <div class="absolute left-[250px] right-[250px] bottom-0 flex flex-col items-start gap-[3px] font-['Liberation_Mono',monospace] text-[9px] leading-[10px]">
                    <output class="ml-[39px] px-[2px] bg-[#4a4a4a] text-[#dadada]">Command: Specify opposite corner or [Fence/WPolygon/CPolygon]:</output>
                    <div class="w-full h-[17px] flex items-center bg-[#b2b2b2] text-[#333]">
                        <div class="w-[36px] h-full flex items-center justify-between pl-[2px] pr-[4px] bg-[#484848]">
                            <span class="w-[4px] h-[12px] bg-[#666]"></span>
                            <button aria-label="Close command line"><svg class="w-[7px] h-[7px]" viewBox="0 0 7 7"><path d="M0 0l7 7M7 0L0 7" stroke="#ccc" stroke-width="1.200"/></svg></button>
                            <button aria-label="Customize"><svg class="w-[9px] h-[9px]" viewBox="0 0 9 9"><path d="M3 3l5 5" stroke="#ccc" stroke-width="2"/><path d="M1 0L0 2l2 2.500 2.500-1L4.500 1 3 0v2H2z" fill="#ccc"/></svg></button>
                        </div>
                        <button aria-label="Recent commands" class="pl-[3px] flex items-center gap-[3px]"><svg class="w-[10px] h-[9px]" viewBox="0 0 10 9"><path d="M.5.5h9v8h-9z" fill="#a2a2b0" stroke="#667"/><path d="M2 2.500l2 2-2 2M5 7h3" fill="none" stroke="#223"/></svg><svg class="w-[4px] h-[2px]"><use href="#dn"/></svg></button>
                        <input aria-label="Command" placeholder="Type a command" class="flex-1 min-w-0 pl-[4px] bg-transparent outline-none placeholder:text-[#6b6b6b]">
                        <svg class="w-[4px] h-[3px] mr-[3px]" viewBox="0 0 4 3"><path d="M0 3h4L2 0z" fill="#111"/></svg>
                    </div>
                </div>

                <!-- crosshair shows through the command line -->
                <div class="absolute bottom-0 left-[477px] w-[2px] h-[30px] bg-white/40"></div>
            </div>

            <!-- layout tabs and status bar -->
            <footer class="h-[20px] flex bg-[#3a3a3a] border-t border-[#4c4c4c]">
                <div class="flex-1 flex items-start pl-[5px] text-[#c4c4c4]">
                    <a href="#" class="h-[12px] w-[42px] text-center font-bold text-white bg-[#777] [clip-path:polygon(0_0,100%_0,88%_100%,14%_100%)]">Model</a>
                    <a href="#" class="h-[12px] w-[43px] text-center bg-[#555] [clip-path:polygon(0_0,100%_0,88%_100%,12%_100%)]">Layout1</a>
                    <a href="#" class="h-[12px] w-[43px] text-center bg-[#555] [clip-path:polygon(0_0,100%_0,88%_100%,12%_100%)]">Layout2</a>
                    <button aria-label="New layout" class="h-[12px] w-[17px] ml-px flex items-center justify-center bg-[#555] [clip-path:polygon(0_100%,25%_0,100%_0,75%_100%)]"><svg class="w-[6px] h-[6px]" viewBox="0 0 7 7"><path d="M3.500 0v7M0 3.500h7" stroke="#eee" stroke-width="1.600"/></svg></button>
                </div>
                <div class="h-[18px] flex bg-[#4e4e4e] border border-[#737373] divide-x divide-[#777] text-[#cfcfcf]">
                    <button class="w-[120px] pr-[3px] flex items-center justify-end text-white">1288.1437, 1140.6823, 0.0000</button>
                    <button class="w-[34px] flex items-center justify-center text-white">MODEL</button>
                    <div class="w-[44px] flex items-center justify-around">
                        <button aria-label="Grid"><svg class="w-[10px] h-[10px]" viewBox="0 0 10 10"><path d="M0 .5h10M0 2.500h10M0 4.500h10M0 6.500h10M0 8.500h10" stroke="#bbb" stroke-dasharray="1 1"/><path d="M.5 0v10M2.500 0v10M4.500 0v10M6.500 0v10M8.500 0v10" stroke="#999" stroke-width=".5"/></svg></button>
                        <button aria-label="Snap"><svg class="w-[10px] h-[10px]" viewBox="0 0 10 10"><path d="M0 .5h10M0 3.500h10M0 6.500h10M0 9.500h10" stroke="#bbb" stroke-dasharray="1 2"/></svg></button>
                        <svg class="w-[5px] h-[3px] text-white"><use href="#dn"/></svg>
                    </div>
                    <button aria-label="Infer constraints" class="w-[17px] flex items-center justify-center"><svg class="w-[10px] h-[10px]" viewBox="0 0 10 10"><path d="M3.500 8V1.500h4V5h-4" fill="none" stroke="#ccc"/><circle cx="2.500" cy="8" r="1.500" fill="#ccc"/></svg></button>
                    <button aria-label="Dynamic input" class="w-[17px] flex items-center justify-center"><svg class="w-[11px] h-[10px]" viewBox="0 0 11 10"><path d="M2.500 0v5M0 2.500h5" stroke="#3b8ef0"/><path d="M4 6h7v4H4z" fill="#2f80e6"/></svg></button>
                    <div class="w-[68px] flex items-center justify-around">
                        <button aria-label="Ortho"><svg class="w-[10px] h-[10px]" viewBox="0 0 10 10"><path d="M1.500 0v8.500H10M2 4h3v4" fill="none" stroke="#ccc"/></svg></button>
                        <button aria-label="Polar tracking"><svg class="w-[11px] h-[11px]" viewBox="0 0 11 11"><circle cx="5.500" cy="5.500" r="4.500" fill="none" stroke="#3b8ef0" stroke-width="1.300"/><path d="M5.500 5.500h5M5.500 5.500L9 2" stroke="#3b8ef0"/></svg></button>
                        <svg class="w-[5px] h-[3px] text-white"><use href="#dn"/></svg>
                        <button aria-label="Isometric drafting"><svg class="w-[11px] h-[11px]" viewBox="0 0 11 11"><path d="M0 1l11 9M5.500 0v11" stroke="#bbb"/></svg></button>
                        <svg class="w-[5px] h-[3px] text-white"><use href="#dn"/></svg>
                    </div>
                    <div class="w-[43px] flex items-center justify-around">
                        <button aria-label="Object snap tracking"><svg class="w-[11px] h-[10px]" viewBox="0 0 11 10"><path d="M0 9h11M1 9l8-8" stroke="#3b8ef0" stroke-width="1.200"/></svg></button>
                        <button aria-label="Object snap"><svg class="w-[11px] h-[11px]" viewBox="0 0 11 11"><path d="M2.500 2.500h7v7h-7z" fill="none" stroke="#3b8ef0" stroke-width="1.200"/><path d="M0 0h4v4H0z" fill="#1c6b3a"/></svg></button>
                        <svg class="w-[5px] h-[3px] text-white"><use href="#dn"/></svg>
                    </div>
                    <button aria-label="Lineweight display" class="w-[17px] flex items-center justify-center"><svg class="w-[11px] h-[10px]" viewBox="0 0 11 10"><path d="M0 1.500h11M0 5h11M0 8.500h7" stroke="#ddd" stroke-width="2"/></svg></button>
                    <button aria-label="Transparency" class="w-[16px] flex items-center justify-center"><svg class="w-[10px] h-[10px]" viewBox="0 0 10 10"><path d="M0 0h10v10H0z" fill="#2f80e6"/><path d="M0 2.500h10M0 5h10M0 7.500h10" stroke="#1d4c8c" stroke-dasharray="1 1"/></svg></button>
                    <button aria-label="Selection cycling" class="w-[17px] flex items-center justify-center"><svg class="w-[10px] h-[10px]" viewBox="0 0 10 10"><path d="M2.500 0v6M0 2.500h6" stroke="#ccc"/><path d="M4 4h6v6H4z" fill="#9ccb84"/></svg></button>
                    <div class="w-[28px] flex items-center justify-around">
                        <button aria-label="3D object snap"><svg class="w-[11px] h-[11px] text-[#3b8ef0]" viewBox="0 0 12 12"><use href="#cube"/><path d="M0 0h4v4H0z" fill="#1c6b3a"/></svg></button>
                        <svg class="w-[5px] h-[3px] text-white"><use href="#dn"/></svg>
                    </div>
                    <div class="w-[70px] flex items-center justify-around">
                        <button aria-label="Dynamic UCS"><svg class="w-[11px] h-[11px]" viewBox="0 0 11 11"><path d="M1.500 1v8.500H10M1.500 9.500L9 2M9 2H6M9 2v4" fill="none" stroke="#3b8ef0" stroke-width="1.200"/></svg></button>
                        <button aria-label="Selection filtering"><svg class="w-[11px] h-[11px]" viewBox="0 0 12 12"><use href="#cube"/></svg></button>
                        <svg class="w-[5px] h-[3px] text-white"><use href="#dn"/></svg>
                        <button aria-label="Gizmo"><svg class="w-[11px] h-[11px]" viewBox="0 0 11 11"><circle cx="5.500" cy="5.500" r="4.500" fill="none" stroke="#aaa"/><path d="M5.500 1v5" stroke="#6c6"/><path d="M5.500 6L9 8" stroke="#d66"/></svg></button>
                        <svg class="w-[5px] h-[3px] text-white"><use href="#dn"/></svg>
                    </div>
                    <div class="w-[98px] flex items-center justify-around">
                        <button aria-label="Annotation visibility"><svg class="w-[12px] h-[12px] text-[#3b8ef0]" viewBox="0 0 12 12"><use href="#man"/><circle cx="9" cy="2.500" r="1.500" fill="none" stroke="currentColor"/></svg></button>
                        <button aria-label="AutoScale"><svg class="w-[12px] h-[12px]" viewBox="0 0 12 12"><use href="#man"/><path d="M9 0L7.500 3h2L8 6" fill="none" stroke="currentColor"/></svg></button>
                        <svg class="w-[12px] h-[12px]"><use href="#man"/></svg>
                        <button class="flex items-center gap-[3px] text-white">1:1 / 100%<svg class="w-[4px] h-[3px]"><use href="#dn"/></svg></button>
                    </div>
                    <button aria-label="Workspace switching" class="w-[27px] flex items-center justify-around"><svg class="w-[9px] h-[9px]" viewBox="0 0 12 12"><use href="#gear"/></svg><svg class="w-[5px] h-[3px] text-white"><use href="#dn"/></svg></button>
                    <button aria-label="Annotation monitor" class="w-[19px] flex items-center justify-center"><svg class="w-[10px] h-[10px]" viewBox="0 0 10 10"><path d="M5 0v10M0 5h10" stroke="#ccc" stroke-width="1.400"/></svg></button>
                    <button class="w-[65px] flex items-center justify-around text-white"><svg class="w-[4px] h-[10px]" viewBox="0 0 4 10"><path d="M0 0h4v10H0z" fill="#ddd"/><path d="M2 2.500h2M2 5h2M2 7.500h2" stroke="#555"/></svg>Decimal<svg class="w-[5px] h-[3px]"><use href="#dn"/></svg></button>
                    <button aria-label="Quick properties" class="w-[17px] flex items-center justify-center"><svg class="w-[7px] h-[9px]" viewBox="0 0 7 9"><path d="M.5.5h6v8h-6zM0 1.500h7M2 4h3v3H2z" fill="none" stroke="#aaa"/></svg></button>
                    <div class="w-[27px] flex items-center justify-around">
                        <button aria-label="Lock UI"><svg class="w-[12px] h-[10px]" viewBox="0 0 12 10"><path d="M.5 8V.5h9V4M2 7h3" fill="none" stroke="#bbb"/><path d="M5 6h5v4H5z" fill="#ccc"/><path d="M8 6V4h3v2" fill="none" stroke="#ccc"/></svg></button>
                        <svg class="w-[5px] h-[3px] text-white"><use href="#dn"/></svg>
                    </div>
                    <button aria-label="Isolate objects" class="w-[17px] flex items-center justify-center"><svg class="w-[11px] h-[10px]" viewBox="0 0 11 10"><path d="M.5.5h4v4h-4z" fill="none" stroke="#bbb"/><circle cx="8" cy="6" r="2" fill="none" stroke="#bbb"/><path d="M2 9l2-3 2 3z" fill="none" stroke="#bbb"/></svg></button>
                    <button aria-label="Hardware acceleration" class="w-[17px] flex items-center justify-center"><svg class="w-[12px] h-[12px]" viewBox="0 0 12 12"><circle cx="6" cy="6" r="5.500" fill="#1f6fd6"/><path d="M3 6l2.500 2.500L9 4" stroke="#0f3f86" fill="none" stroke-width="1.300"/></svg></button>
                    <div class="w-[36px] flex items-center justify-around">
                        <button aria-label="Clean screen"><svg class="w-[12px] h-[9px]" viewBox="0 0 12 9"><path d="M.5.5h11v8H.5z" fill="none" stroke="#bbb"/><path d="M6 4l3-2M9 2v3M5 5L2 7M3 4v3" stroke="#ddd"/></svg></button>
                        <button aria-label="Customization"><svg class="w-[11px] h-[9px]" viewBox="0 0 11 9"><path d="M0 1h11M0 4.500h11M0 8h11" stroke="#ccc" stroke-width="1.400"/></svg></button>
                    </div>
                </div>
            </footer>
        </main>
    </div>

    <!-- windows taskbar -->
    <div class="h-[27px] flex items-stretch bg-[#030509]">
        <button aria-label="Start" class="w-[32px] flex items-center justify-center"><svg class="w-[12px] h-[12px]" viewBox="0 0 12 12"><path d="M0 1.700l5-.7v4.500H0zM6 .8l6-.8v5.500H6zM0 6.500h5V11l-5-.7zM6 6.500h6V12l-6-.8z" fill="#fff"/></svg></button>
        <label class="w-[229px] pl-[6px] pr-[9px] flex items-center gap-[5px] bg-[#343434]">
            <svg class="w-[15px] h-[15px]" viewBox="0 0 15 15"><circle cx="7.500" cy="7.500" r="6" fill="none" stroke="#f4f4f4" stroke-width="2"/></svg>
            <input aria-label="Search" placeholder="Type here to search" class="flex-1 min-w-0 bg-transparent outline-none text-[10px] placeholder:text-[#a5a5a5]">
            <svg class="w-[9px] h-[12px]" viewBox="0 0 9 12"><rect x="3" y=".5" width="3" height="7" rx="1.500" fill="none" stroke="#aaa"/><path d="M.5 5.500c0 5 8 5 8 0M4.500 9v3" fill="none" stroke="#aaa"/></svg>
        </label>
        <button aria-label="Task view" class="w-[34px] flex items-center justify-center"><svg class="w-[13px] h-[10px]" viewBox="0 0 13 10"><path d="M3 .5h7v9H3zM1.500 2h-1v6h1M11.500 2h1v6h-1" fill="none" stroke="#e6e6e6"/></svg></button>
        <button aria-label="AutoCAD" class="w-[32px] flex items-center justify-center bg-[#2f3237] border-b-2 border-[#6fa8dc]"><svg class="w-4 h-4 bg-[#f4eaea]" viewBox="0 0 20 20"><use href="#acad"/></svg></button>
        <button aria-label="File Explorer" class="w-[28px] mx-[2px] flex items-center justify-center border-b-2 border-[#6fa8dc]"><svg class="w-[15px] h-[14px]" viewBox="0 0 15 14"><path d="M0 1h6l1 2h8v10H0z" fill="#f5d67a"/><path d="M1 4h13v5H1z" fill="#fdf0b8"/><path d="M3 13V8h9v5H9.500v-2.500h-4V13z" fill="#3fa2b5"/></svg></button>
        <button aria-label="Firefox" class="w-[27px] ml-[3px] flex items-center justify-center border-b-2 border-[#6fa8dc]"><svg class="w-[16px] h-[16px]" viewBox="0 0 16 16"><circle cx="8" cy="8.500" r="7" fill="#ef4d23"/><path d="M9 1c5 1 7 6 5 10-2 3-5 4-7 4 4-2 6-6 3-10z" fill="#ffc629"/><circle cx="7.500" cy="7.500" r="3.800" fill="#2a57a8"/><path d="M1 4c2-1 4 0 5 2L4.500 8c1 3 4 3 6 2-2 5-9 4-9-2z" fill="#f5742a"/></svg></button>
        <div class="ml-auto flex items-center gap-[4px] pr-[12px]">
            <svg class="w-[9px] h-[5px]" viewBox="0 0 9 5"><path d="M.5 4.500l4-4 4 4" fill="none" stroke="#eee"/></svg>
            <svg class="ml-[4px] w-[11px] h-[10px]" viewBox="0 0 11 10"><path d="M0 8l6-7 1 3z" fill="#d5342a"/><path d="M5 1l3 3-4 4z" fill="#b3201c"/><path d="M7 5l4 5-4-2z" fill="#59c15a"/></svg>
            <svg class="ml-[2px] w-[10px] h-[10px]" viewBox="0 0 10 10"><path d="M1 9C1 5 5 1 9 1M3.500 9C4 6 6 4 9 4M6 9c0-1 1-2 3-2" fill="none" stroke="#ddd"/><path d="M7 8h2v2H7z" fill="#fff"/></svg>
            <svg class="w-[11px] h-[10px]" viewBox="0 0 11 10"><path d="M.5 3.500h2l3-3v9l-3-3h-2z" fill="none" stroke="#eee"/><path d="M7 3c1 1 1 3 0 4M8.500 1.500c2 2 2 5 0 7" fill="none" stroke="#ccc"/></svg>
            <time class="w-[44px] ml-px text-center text-white leading-[12px]">9:58 CH<br>04/01/2018</time>
            <button aria-label="Notifications" class="ml-[6px]"><svg class="w-[16px] h-[16px]" viewBox="0 0 16 16"><path d="M0 1h11v9H5l-2 2v-2H0z" fill="#f2f2f2"/><path d="M2 3.500h7M2 5.500h7M2 7.500h5" stroke="#444" stroke-width=".8"/><circle cx="10.500" cy="10.500" r="5" fill="#333" stroke="#888" stroke-width=".6"/><text x="10.500" y="13.500" text-anchor="middle" font-size="8" font-weight="bold" fill="#fff">3</text></svg></button>
        </div>
    </div>

</body>
</html>
